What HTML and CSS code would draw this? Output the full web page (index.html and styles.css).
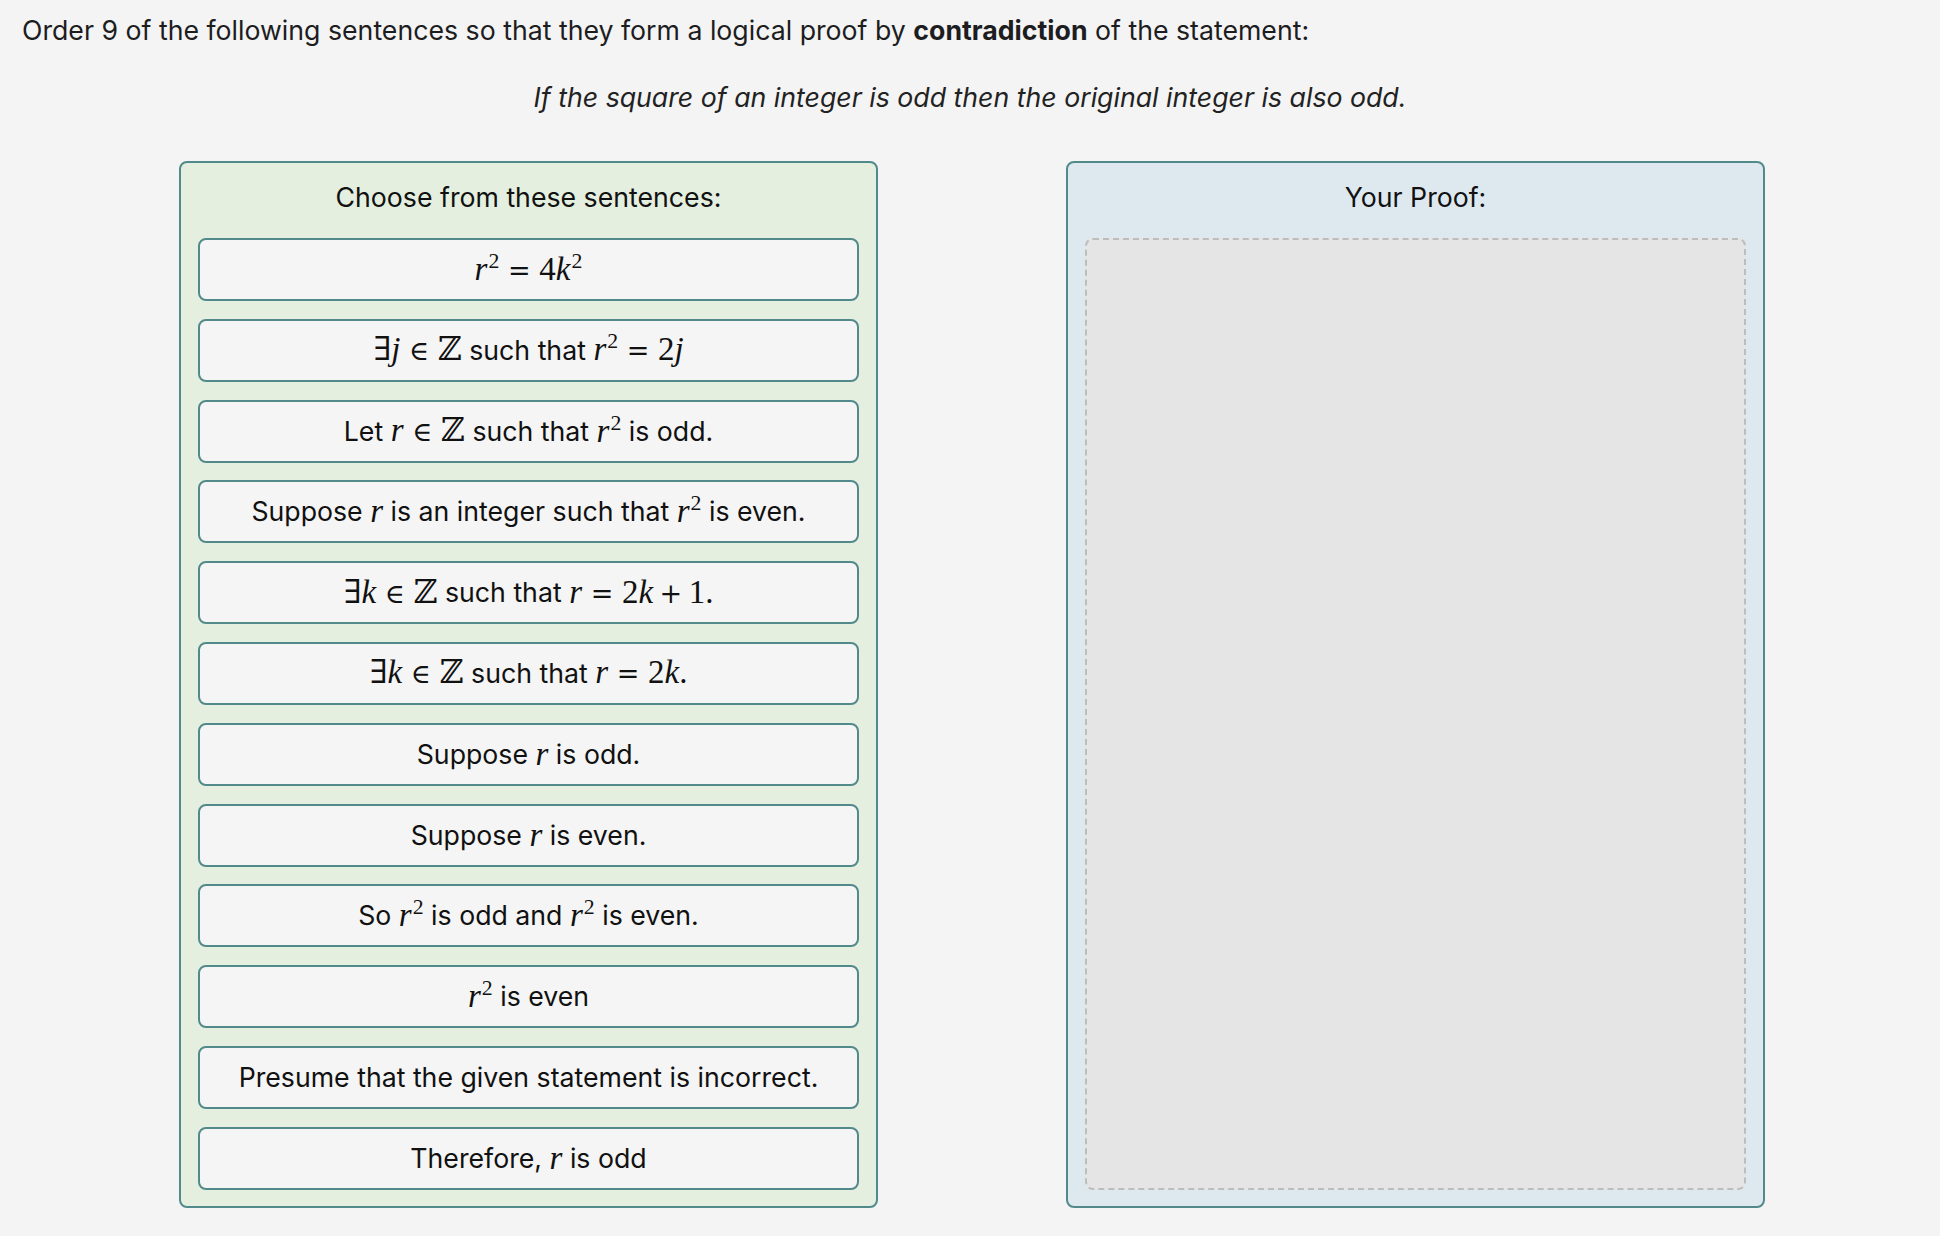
FILE: index.html
```html
<!DOCTYPE html>
<html lang="en">
<head>
  <meta charset="UTF-8" />
  <meta name="viewport" content="width=device-width, initial-scale=1.0" />
  <title>Proof ordering</title>
  <link rel="stylesheet" href="styles.css">
</head>
<body>
  <p class="prompt">Order 9 of the following sentences so that they form a logical proof by <strong>contradiction</strong> of the statement:</p>
  <p class="statement"><em>If the square of an integer is odd then the original integer is also odd.</em></p>

  <div class="board">
    <div class="panel choices">
      <div class="panel-title">Choose from these sentences:</div>
      <ul class="cards">
        <li class="card"><span class="m"><i>r</i><sup>2</sup><span class="rel">=</span>4<i>k</i><sup>2</sup></span></li>
        <li class="card"><span class="m">∃<i>j</i><span class="rel">∈</span>ℤ</span>&nbsp;such that&nbsp;<span class="m"><i>r</i><sup>2</sup><span class="rel">=</span>2<i>j</i></span></li>
        <li class="card">Let&nbsp;<span class="m"><i>r</i><span class="rel">∈</span>ℤ</span>&nbsp;such that&nbsp;<span class="m"><i>r</i><sup>2</sup></span>&nbsp;is odd.</li>
        <li class="card">Suppose&nbsp;<span class="m"><i>r</i></span>&nbsp;is an integer such that&nbsp;<span class="m"><i>r</i><sup>2</sup></span>&nbsp;is even.</li>
        <li class="card"><span class="m">∃<i>k</i><span class="rel">∈</span>ℤ</span>&nbsp;such that&nbsp;<span class="m"><i>r</i><span class="rel">=</span>2<i>k</i><span class="bin">+</span>1.</span></li>
        <li class="card"><span class="m">∃<i>k</i><span class="rel">∈</span>ℤ</span>&nbsp;such that&nbsp;<span class="m"><i>r</i><span class="rel">=</span>2<i>k</i>.</span></li>
        <li class="card">Suppose&nbsp;<span class="m"><i>r</i></span>&nbsp;is odd.</li>
        <li class="card">Suppose&nbsp;<span class="m"><i>r</i></span>&nbsp;is even.</li>
        <li class="card">So&nbsp;<span class="m"><i>r</i><sup>2</sup></span>&nbsp;is odd and&nbsp;<span class="m"><i>r</i><sup>2</sup></span>&nbsp;is even.</li>
        <li class="card"><span class="m"><i>r</i><sup>2</sup></span>&nbsp;is even</li>
        <li class="card">Presume that the given statement is incorrect.</li>
        <li class="card">Therefore,&nbsp;<span class="m"><i>r</i></span>&nbsp;is odd</li>
      </ul>
    </div>

    <div class="panel proof">
      <div class="panel-title">Your Proof:</div>
      <div class="dropzone"></div>
    </div>
  </div>
</body>
</html>
```

FILE: styles.css
```css
body {
  margin: 0;
  padding: 16px 22px 0;
  background-color: #f4f4f4;
  color: #1d1d1f;
  font-family: Inter, 'Liberation Sans', sans-serif;
  font-size: 26.7px;
  line-height: 29px;
}

.prompt {
  margin: 0;
}

.statement {
  margin: 38px 0 0;
  text-align: center;
  color: #222;
}

.board {
  display: flex;
  justify-content: center;
  gap: 188px;
  margin-top: 49px;
  padding-left: 4px;
}

.panel {
  width: 699px;
  box-sizing: border-box;
  border: 2px solid #528a8b;
  border-radius: 8px;
  padding: 20px 17px 16px;
  display: flex;
  flex-direction: column;
}

.choices {
  background-color: #e4efdf;
}

.proof {
  background-color: #dee9ef;
}

.panel-title {
  text-align: center;
  color: #111;
  margin-bottom: 26px;
}

.cards {
  list-style: none;
  margin: 0;
  padding: 0;
  display: flex;
  flex-direction: column;
  gap: 17.8px;
}

.card {
  height: 63px;
  box-sizing: border-box;
  border: 2px solid #528a8b;
  border-radius: 8px;
  background-color: #f5f5f5;
  display: flex;
  justify-content: center;
  align-items: center;
  color: #111;
  white-space: nowrap;
}

.dropzone {
  flex: 1;
  border: 2px dashed #bdbdbd;
  border-radius: 8px;
  background-color: #e5e5e5;
}

/* math bits */
.m {
  font-family: 'Liberation Serif', 'DejaVu Serif', serif;
  font-size: 33px;
}

.m i {
  font-style: italic;
}

.m sup {
  font-size: 0.66em;
  line-height: 0;
  vertical-align: 0.55em;
  margin-left: 1px;
}

.rel,
.bin {
  font-family: 'DejaVu Serif', serif;
  font-size: 0.82em;
  padding: 0 0.32em;
}

.bin {
  padding: 0 0.24em;
}
```
